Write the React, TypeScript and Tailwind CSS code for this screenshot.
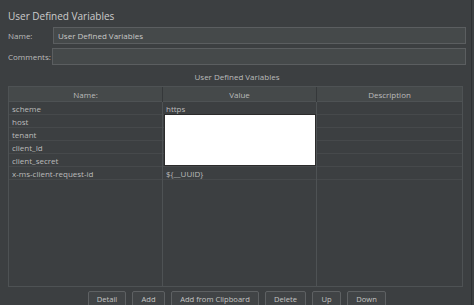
import React from 'react';

const ROWS: { name: string; value: string }[] = [
  { name: 'scheme', value: 'https' },
  { name: 'host', value: '' },
  { name: 'tenant', value: '' },
  { name: 'client_Id', value: '' },
  { name: 'client_secret', value: '' },
  { name: 'x-ms-client-request-id', value: '${__UUID}' },
];

const BUTTONS: { label: string; w: string }[] = [
  { label: 'Detail', w: 'w-[38px]' },
  { label: 'Add', w: 'w-[33px]' },
  { label: 'Add from Clipboard', w: 'w-[88px]' },
  { label: 'Delete', w: 'w-[41px]' },
  { label: 'Up', w: 'w-[29px]' },
  { label: 'Down', w: 'w-[39px]' },
];

export default function App() {
  return (
    <div
      className="w-[474px] h-[305px] overflow-hidden bg-[#3c3f41] text-[#bbbbbb] flex relative"
      style={{ fontFamily: '"Open Sans", "Noto Sans", sans-serif' }}
    >
      <div className="flex-1 flex flex-col pl-[8px] pr-[5px]">
        <div className="shrink-0 text-[10px] text-[#cccccc] pt-[9px] h-[26px] leading-[14px]">User Defined Variables</div>

        <div className="shrink-0 flex items-center h-[19px] text-[8px]">
          <span className="w-[45px]">Name:</span>
          <div className="flex-1 h-[17px] bg-[#45494a] border border-[#5b5e60] flex items-center px-[4px] text-[#c8c8c8]">
            User Defined Variables
          </div>
        </div>
        <div className="shrink-0 flex items-center h-[19px] mt-[2px] text-[8px]">
          <span className="w-[44px]">Comments:</span>
          <div className="flex-1 h-[17px] bg-[#45494a] border border-[#5b5e60]" />
        </div>

        <div className="shrink-0 text-center text-[8px] h-[20px] leading-[20px] pt-[1px]">User Defined Variables</div>

        <div className="shrink-0 mr-[3px] h-[201px] border border-[#4e5254] flex flex-col text-[8px]">
          <div className="grid grid-cols-[154px_154px_1fr] h-[15px] bg-[#45494a] border-b border-[#4e5254]">
            <div className="text-center leading-[15px] border-r border-[#35383a]">Name:</div>
            <div className="text-center leading-[15px] border-r border-[#35383a]">Value</div>
            <div className="text-center leading-[15px]">Description</div>
          </div>
          <div className="grid grid-cols-[154px_154px_1fr] flex-1 relative">
            <div className="flex flex-col border-r border-[#4e5254]">
              {ROWS.map((r) => (
                <div key={r.name} className="h-[13px] leading-[13px] px-[3px] border-b border-[#46494b]">{r.name}</div>
              ))}
            </div>
            <div className="flex flex-col border-r border-[#4e5254]">
              {ROWS.map((r) => (
                <div key={r.name} className="h-[13px] leading-[13px] px-[3px] border-b border-[#46494b]">{r.value}</div>
              ))}
            </div>
            <div className="flex flex-col">
              {ROWS.map((r) => (
                <div key={r.name} className="h-[13px] border-b border-[#46494b]" />
              ))}
            </div>
            <div className="absolute left-[155px] top-[12px] w-[152px] h-[52px] bg-white border border-[#2b2b2b]" />
          </div>
        </div>

        <div className="shrink-0 flex justify-center gap-[6px] mt-[4px] text-[7.6px]">
          {BUTTONS.map((b) => (
            <div key={b.label} className={`${b.w} shrink-0 h-[20px] text-center border border-[#5e6163] bg-[#414446] rounded-[2px] leading-[15px] text-[#c4c4c4] whitespace-nowrap`}>
              {b.label}
            </div>
          ))}
        </div>
      </div>
      <div className="w-[3px] border-l border-[#2e3133] bg-[#3c3f41]" />
    </div>
  );
}
